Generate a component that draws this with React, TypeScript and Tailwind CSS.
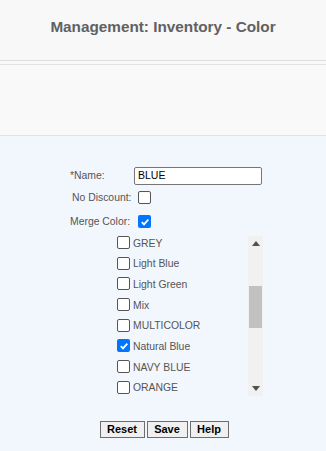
import React from "react";

const colors = [
  { name: "GREY", checked: false },
  { name: "Light Blue", checked: false },
  { name: "Light Green", checked: false },
  { name: "Mix", checked: false },
  { name: "MULTICOLOR", checked: false },
  { name: "Natural Blue", checked: true },
  { name: "NAVY BLUE", checked: false },
  { name: "ORANGE", checked: false },
];

const Box = ({ checked }: { checked: boolean }) =>
  checked ? (
    <span className="flex h-[13px] w-[13px] shrink-0 items-center justify-center rounded-[2px] bg-[#0075ff]">
      <svg width="10" height="10" viewBox="0 0 10 10">
        <path d="M1.8 5.2 L4 7.4 L8.3 2.6" fill="none" stroke="#fff" strokeWidth="1.8" />
      </svg>
    </span>
  ) : (
    <span className="h-[13px] w-[13px] shrink-0 rounded-[2px] border border-[#555] bg-white" />
  );

export default function App() {
  return (
    <div className="flex min-h-screen flex-col bg-[#f2f6fd] font-['Liberation_Sans',Arial,sans-serif]">
      {/* header */}
      <div className="flex h-[60px] items-center justify-center bg-[#f8f8f8]">
        <h1 className="pb-[5px] text-[15.3px] font-bold text-[#5f6163]">
          Management: Inventory - Color
        </h1>
      </div>
      <div className="h-[4px] border-t border-[#dedede] bg-[#f8f8f8]" />
      <div className="h-[72px] border-t border-b border-[#e2e2e2] bg-[#f9f9f9]" />

      {/* form */}
      <div className="pt-[31px] text-[10.4px] text-[#555]">
        <div className="flex h-[18px] items-center">
          <span className="ml-[70px] w-[64px]">*Name:</span>
          <div className="flex h-[18px] w-[128px] items-center rounded-[2px] border border-[#767676] bg-white pl-[3px] text-[10.5px] text-black">
            BLUE
          </div>
        </div>
        <div className="mt-[6px] flex h-[13px] items-center">
          <span className="ml-[72px] w-[66px]">No Discount:</span>
          <Box checked={false} />
        </div>
        <div className="mt-[11px] flex h-[13px] items-center">
          <span className="ml-[70px] w-[68px]">Merge Color:</span>
          <Box checked />
        </div>

        {/* color list */}
        <div className="ml-[110px] mt-[8px] flex h-[160px] w-[153px]">
          <div className="flex-1 overflow-hidden">
            <div className="-mt-[4px] pl-[7px]">
              {colors.map((c) => (
                <div key={c.name} className="flex h-[20.7px] items-center gap-[3px]">
                  <Box checked={c.checked} />
                  <span className="pt-[2px]">{c.name}</span>
                </div>
              ))}
            </div>
          </div>
          <div className="flex w-[15px] flex-col items-center bg-[#f1f1f1]">
            <div className="flex h-[15px] w-full items-center justify-center">
              <svg width="8" height="5" viewBox="0 0 8 5">
                <path d="M0 5 L4 0 L8 5 Z" fill="#505050" />
              </svg>
            </div>
            <div className="mt-[35px] h-[42px] w-[13px] bg-[#c1c1c1]" />
            <div className="flex-1" />
            <div className="flex h-[15px] w-full items-center justify-center">
              <svg width="8" height="5" viewBox="0 0 8 5">
                <path d="M0 0 L4 5 L8 0 Z" fill="#505050" />
              </svg>
            </div>
          </div>
        </div>

        {/* buttons */}
        <div className="mt-[25px] flex justify-center gap-[2px] pl-[2px]">
          <button className="h-[17px] w-[45px] border border-[#6d6d6d] bg-[#f0f0f0] text-[11px] font-bold leading-[15px] text-black">
            Reset
          </button>
          <button className="h-[17px] w-[41px] border border-[#6d6d6d] bg-[#f0f0f0] text-[11px] font-bold leading-[15px] text-black">
            Save
          </button>
          <button className="h-[17px] w-[39px] border border-[#6d6d6d] bg-[#f0f0f0] text-[11px] font-bold leading-[15px] text-black">
            Help
          </button>
        </div>
      </div>
    </div>
  );
}
